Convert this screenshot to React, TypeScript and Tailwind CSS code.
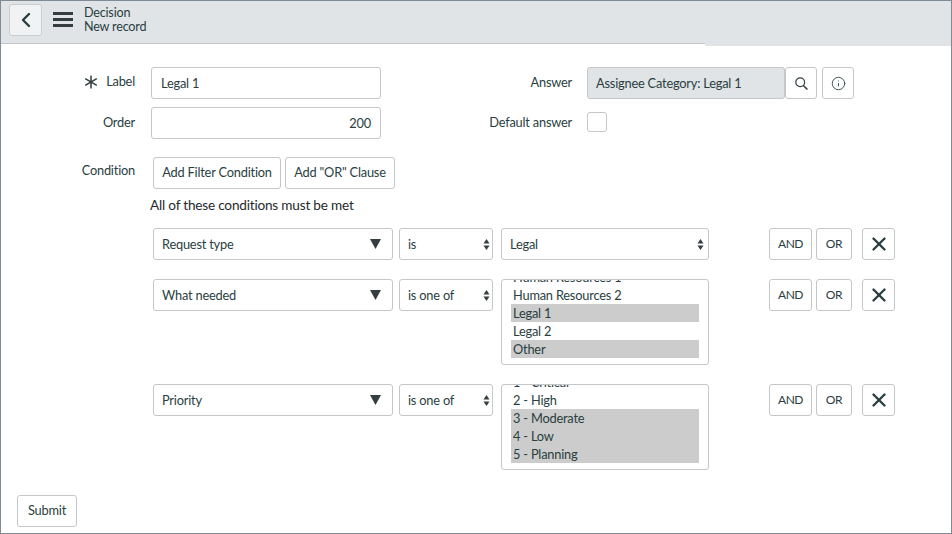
import { Info, X, ChevronLeft } from 'lucide-react'

const box = 'h-8 rounded-[3px] border border-[#c4c7ca] bg-white text-[#293e40] flex items-center shrink-0'

const DownTriangle = () => (
  <svg width="11" height="10" viewBox="0 0 11 10" className="shrink-0"><path d="M0 0h11L5.5 10z" fill="#343d3f" /></svg>
)

const UpDown = () => (
  <svg width="7" height="11" viewBox="0 0 7 11" className="shrink-0">
    <path d="M3.5 0l3 4.5h-6z" fill="#343d3f" />
    <path d="M3.5 11L.5 6.5h6z" fill="#343d3f" />
  </svg>
)

const SearchIcon = () => (
  <svg width="13" height="13" viewBox="0 0 13 13" fill="none" stroke="#343d3f" strokeWidth="1.2">
    <circle cx="5.2" cy="5.2" r="4.4" />
    <path d="M8.4 8.4L12.4 12.6" strokeWidth="1.4" />
  </svg>
)

const Asterisk = () => (
  <svg width="14" height="14" viewBox="0 0 14 14" fill="none" stroke="#343d3f" strokeWidth="1.5" className="shrink-0">
    <path d="M7 .5v13M1.2 3.6l11.6 6.8M12.8 3.6L1.2 10.4" />
  </svg>
)

const ListBox = ({ items, selected }: { items: string[]; selected: string[] }) => (
  <div className="w-[208px] h-[86px] ml-2 shrink-0 rounded-[3px] border border-[#c4c7ca] bg-white overflow-hidden flex flex-col justify-end pb-[6px] px-[9px]">
    {items.map((item) => (
      <div key={item} className={`h-[18px] leading-[18px] pl-[2px] w-[188px] shrink-0 text-[#293e40] ${selected.includes(item) ? 'bg-[#cccccc]' : ''}`}>
        {item}
      </div>
    ))}
  </div>
)

const FilterRow = ({ field, op, value, items, selected, rowClass }: { field: string; op: string; value?: string; items?: string[]; selected?: string[]; rowClass: string }) => (
  <div className={`flex items-start ${rowClass}`}>
    <div className={`${box} w-[240px] pl-2 pr-[11px] justify-between`}>
      <span className="pt-[2px]">{field}</span>
      <DownTriangle />
    </div>
    <div className={`${box} w-[94px] ml-[6px] pl-2 pr-[2px] justify-between`}>
      <span className="pt-[2px]">{op}</span>
      <UpDown />
    </div>
    {value ? (
      <div className={`${box} w-[208px] ml-2 pl-2 pr-[4px] justify-between`}>
        <span className="pt-[2px]">{value}</span>
        <UpDown />
      </div>
    ) : (
      <ListBox items={items ?? []} selected={selected ?? []} />
    )}
    <button className={`${box} w-[43px] ml-[60px] justify-center text-[12px] tracking-[-0.5px]`}>AND</button>
    <button className={`${box} w-[36px] ml-1 justify-center text-[12px] tracking-[-0.4px]`}>OR</button>
    <button className={`${box} w-[33px] ml-[10px] justify-center`}><X size={22} strokeWidth={2.6} /></button>
  </div>
)

const App = () => {
  return (
    <div className="w-[952px] h-[534px] border border-[#7f8b96] bg-white overflow-hidden text-[12.8px] tracking-[-0.2px] text-[#293e40] font-['Lato','Noto_Sans',sans-serif] flex flex-col">
      <header className="h-[43px] shrink-0 flex bg-[#e1e4e7]">
        <div className="flex-1 flex items-center border-b border-[#c4c7ca] pl-[8px] pb-[5px]">
          <button className="w-[33px] h-8 rounded-[3px] border border-[#c9ccd0] bg-[#f1f2f3] flex items-center justify-center">
            <ChevronLeft size={24} strokeWidth={2.4} />
          </button>
          <div className="ml-[11px] w-[20px] flex flex-col gap-[3px]">
            <div className="h-[3px] bg-[#343d3f]" />
            <div className="h-[3px] bg-[#343d3f]" />
            <div className="h-[3px] bg-[#343d3f]" />
          </div>
          <div className="ml-[11px] leading-[14px] text-[12.6px]">
            <div>Decision</div>
            <div>New record</div>
          </div>
        </div>
        <div className="w-[246px] h-[45px] bg-[#e1e4e7]" />
      </header>

      <main className="flex-1 flex flex-col">
        <div className="flex mt-[23px]">
          <div className="w-[135px] flex items-center justify-end pb-[2px] pr-[1px] gap-[8px]">
            <Asterisk />
            <span>Label</span>
          </div>
          <div className={`${box} w-[230px] ml-[15px] px-[9px] pt-[2px]`}>Legal 1</div>
          <div className="w-[191px] text-right -mt-[1px] leading-8">Answer</div>
          <div className={`${box} w-[198px] ml-[15px] pl-[8px] pt-[2px] !bg-[#e1e4e7]`}>Assignee Category: Legal 1</div>
          <button className={`${box} w-[32px] justify-center`}><SearchIcon /></button>
          <button className={`${box} w-[32px] ml-[5px] justify-center`}><Info size={15} strokeWidth={1.4} /></button>
        </div>

        <div className="flex mt-2">
          <div className="w-[135px] text-right leading-8 pr-[1px] -mt-[1px]">Order</div>
          <div className={`${box} w-[230px] ml-[15px] px-[9px] pt-[2px] justify-end`}>200</div>
          <div className="w-[191px] text-right leading-8 -mt-[1px]">Default answer</div>
          <div className="w-5 h-5 ml-[15px] mt-[5px] rounded-[3px] border border-[#c4c7ca]" />
        </div>

        <div className="flex mt-[18px]">
          <div className="w-[135px] text-right pr-[1px] leading-[26px]">Condition</div>
          <button className={`${box} w-[128px] ml-[17px] justify-center`}>Add Filter Condition</button>
          <button className={`${box} w-[110px] ml-1 justify-center`}>Add "OR" Clause</button>
        </div>

        <div className="ml-[149px] mt-[7px] h-[18px] leading-[18px] text-[13.6px] text-[#1f2a2c]">All of these conditions must be met</div>

        <div className="ml-[152px] mt-[14px] flex flex-col">
          <FilterRow field="Request type" op="is" value="Legal" rowClass="" />
          <FilterRow field="What needed" op="is one of" items={['Human Resources 1', 'Human Resources 2', 'Legal 1', 'Legal 2', 'Other']} selected={['Legal 1', 'Other']} rowClass="mt-[19px]" />
          <FilterRow field="Priority" op="is one of" items={['1 - Critical', '2 - High', '3 - Moderate', '4 - Low', '5 - Planning']} selected={['3 - Moderate', '4 - Low', '5 - Planning']} rowClass="mt-[19px]" />
        </div>

        <div className="ml-4 mt-[25px]">
          <button className={`${box} w-[60px] justify-center`}>Submit</button>
        </div>
      </main>
    </div>
  )
}

export default App
